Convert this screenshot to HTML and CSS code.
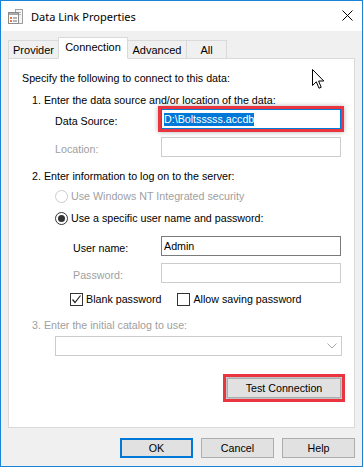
FILE: index.html
```html
<!DOCTYPE html>
<html>
<head>
<meta charset="utf-8">
<link rel="stylesheet" href="styles.css">
</head>
<body>
<div class="window">
  <div class="titlebar">
    <svg class="app-icon" width="16" height="16" viewBox="0 0 16 16">
      <rect x="7.5" y="0.5" width="7" height="14" fill="#f4f4f4" stroke="#a0a0a0"/>
      <line x1="9" y1="3.5" x2="13" y2="3.5" stroke="#b8b8b8"/>
      <line x1="9" y1="5.5" x2="13" y2="5.5" stroke="#b8b8b8"/>
      <rect x="0.5" y="3.5" width="10" height="11" fill="#fff" stroke="#8c8c8c"/>
      <rect x="1" y="4" width="9" height="2" fill="#a9a9a9"/>
      <rect x="2" y="8" width="2" height="2" fill="#e07b39"/>
      <rect x="5" y="8" width="4" height="2" fill="#b4b4b4"/>
      <rect x="2" y="11" width="2" height="2" fill="#e07b39"/>
      <rect x="5" y="11" width="4" height="2" fill="#b4b4b4"/>
    </svg>
    <span class="title">Data Link Properties</span>
    <svg class="close" width="11" height="11" viewBox="0 0 11 11">
      <path d="M0.5 0.5 L10.5 10.5 M10.5 0.5 L0.5 10.5" stroke="#000" stroke-width="1"/>
    </svg>
  </div>

  <div class="body">
    <div class="tabs">
      <div class="tab t-provider">Provider</div>
      <div class="tab active t-connection">Connection</div>
      <div class="tab t-advanced">Advanced</div>
      <div class="tab t-all">All</div>
    </div>

    <div class="panel">
      <div class="line intro">Specify the following to connect to this data:</div>
      <div class="line step step-1">1. Enter the data source and/or location of the data:</div>

      <div class="field-row row-source">
        <span class="label">Data Source:</span>
        <div class="input focused annotated"><span class="sel">D:\Boltsssss.accdb</span></div>
      </div>
      <div class="field-row row-location">
        <span class="label disabled">Location:</span>
        <div class="input disabled-input"></div>
      </div>

      <div class="line step step-2">2. Enter information to log on to the server:</div>
      <div class="option row-nt">
        <span class="radio radio-disabled"></span>
        <span class="disabled">Use Windows NT Integrated security</span>
      </div>
      <div class="option row-specific">
        <span class="radio radio-checked"></span>
        <span>Use a specific user name and password:</span>
      </div>

      <div class="field-row login row-user">
        <span class="label">User name:</span>
        <div class="input active-input">Admin</div>
      </div>
      <div class="field-row login row-pass">
        <span class="label disabled">Password:</span>
        <div class="input disabled-input"></div>
      </div>

      <div class="checks">
        <div class="check-item">
          <span class="checkbox">
            <svg width="11" height="11" viewBox="0 0 11 11"><path d="M1.5 5.5 L4 8.5 L9.5 1.5" fill="none" stroke="#222" stroke-width="1.2"/></svg>
          </span>
          <span>Blank password</span>
        </div>
        <div class="check-item">
          <span class="checkbox"></span>
          <span>Allow saving password</span>
        </div>
      </div>

      <div class="line step step-3 disabled">3. Enter the initial catalog to use:</div>
      <div class="combo">
        <svg class="chevron" width="10" height="6" viewBox="0 0 10 6"><path d="M0.5 0.5 L5 5 L9.5 0.5" fill="none" stroke="#a8a8a8"/></svg>
      </div>

      <div class="test-row">
        <button class="btn btn-test">Test Connection</button>
      </div>
    </div>

    <div class="footer">
      <button class="btn btn-default">OK</button>
      <button class="btn">Cancel</button>
      <button class="btn">Help</button>
    </div>
  </div>

  <svg class="cursor" width="13" height="21" viewBox="0 0 13 21">
    <path d="M0.5 0.5 V16.5 L4.3 12.8 L7 19.2 L9.2 18.3 L6.6 12 H11.8 Z" fill="#fff" stroke="#000"/>
  </svg>
</div>
</body>
</html>
```

FILE: styles.css
```css
html, body {
  margin: 0;
  padding: 0;
  background: #ffffff;
}

.window {
  position: relative;
  width: 363px;
  height: 467px;
  box-sizing: border-box;
  border: 1px solid #1883d7;
  background: #f0f0f0;
  display: flex;
  flex-direction: column;
  font-family: "Liberation Sans", Arial, sans-serif;
  font-size: 10.7px;
  color: #000;
  overflow: hidden;
}

/* ---------- title bar ---------- */
.titlebar {
  height: 30px;
  flex: none;
  background: #ffffff;
  display: flex;
  align-items: center;
  padding-left: 7px;
}

.app-icon {
  flex: none;
  margin-top: 1px;
}

.title {
  margin-left: 7px;
  font-family: "Noto Sans", "Open Sans", sans-serif;
  font-size: 11px;
  color: #000;
}

.close {
  margin-left: auto;
  margin-right: 9px;
  margin-top: -1px;
}

/* ---------- body ---------- */
.body {
  flex: 1;
  display: flex;
  flex-direction: column;
  padding: 6px 7px 0 7px;
  min-height: 0;
}

.tabs {
  display: flex;
  align-items: flex-end;
  height: 22px;
  margin-bottom: -1px;
  position: relative;
  z-index: 1;
}

.tab {
  box-sizing: border-box;
  height: 19px;
  border: 1px solid #d9d9d9;
  background: #f0f0f0;
  display: flex;
  align-items: center;
  justify-content: center;
  padding-top: 1px;
  margin-left: -1px;
  font-size: 11px;
}

.t-provider { width: 51px; margin-left: 0; }
.t-connection { width: 70px; }
.t-advanced { width: 60px; }
.t-all { width: 41px; }

.tab.active {
  height: 22px;
  background: #ffffff;
  border-bottom-color: #ffffff;
  padding-top: 0;
  padding-bottom: 2px;
  position: relative;
  z-index: 2;
}

.panel {
  flex: 1;
  display: flex;
  flex-direction: column;
  background: #ffffff;
  border: 1px solid #d9d9d9;
  padding: 12px 13px 0 13px;
  min-height: 0;
}

.line {
  height: 14px;
  line-height: 14px;
  white-space: nowrap;
}

.step { margin-left: 10px; }
.step-1 { margin-top: 8px; }
.step-2 { margin-top: 12px; }
.step-3 { margin-top: 12px; }

.disabled { color: #a0a0a0; }

/* ---------- fields ---------- */
.field-row {
  display: grid;
  grid-template-columns: 106px 180px;
  align-items: center;
  margin-left: 33px;
  height: 20px;
}

.row-source { margin-top: 2px; }
.row-location { margin-top: 8px; }
.row-user { margin-top: 11px; }
.row-pass { margin-top: 7px; }

.label {
  padding-top: 3px;
  white-space: nowrap;
}

.login .label { padding-left: 18px; }

.input {
  box-sizing: border-box;
  height: 20px;
  border: 1px solid #cccccc;
  background: #ffffff;
  padding-left: 2px;
  display: flex;
  align-items: center;
  white-space: nowrap;
}

.input.focused { border-color: #0078d7; }
.input.active-input { border-color: #7a7a7a; }

.sel {
  background: #0078d7;
  color: #ffffff;
  line-height: 13px;
}

.annotated {
  outline: 3px solid #e8353f;
  box-shadow: 0 0 5px 3px rgba(0, 0, 0, 0.3);
}

/* ---------- radio options ---------- */
.option {
  display: flex;
  align-items: center;
  height: 14px;
  margin-left: 33px;
  white-space: nowrap;
}

.row-nt { margin-top: 6px; }
.row-specific { margin-top: 8px; }

.radio {
  box-sizing: border-box;
  width: 13px;
  height: 13px;
  border-radius: 50%;
  border: 1px solid #333333;
  background: #ffffff;
  margin-right: 3px;
  flex: none;
  display: flex;
  align-items: center;
  justify-content: center;
}

.radio-disabled { border-color: #cccccc; }

.radio-checked::after {
  content: "";
  width: 7px;
  height: 7px;
  border-radius: 50%;
  background: #333333;
}

/* ---------- checkboxes ---------- */
.checks {
  display: flex;
  gap: 16px;
  height: 14px;
  margin-top: 9px;
  margin-left: 48px;
  align-items: center;
}

.check-item {
  display: flex;
  align-items: center;
  white-space: nowrap;
}

.checkbox {
  box-sizing: border-box;
  width: 13px;
  height: 13px;
  border: 1px solid #333333;
  background: #ffffff;
  margin-right: 3px;
  display: flex;
  align-items: center;
  justify-content: center;
  flex: none;
}

/* ---------- combo ---------- */
.combo {
  box-sizing: border-box;
  width: 287px;
  height: 20px;
  margin-left: 33px;
  margin-top: 4px;
  border: 1px solid #cccccc;
  background: #ffffff;
  display: flex;
  align-items: center;
  justify-content: flex-end;
  padding-right: 4px;
}

/* ---------- buttons ---------- */
.test-row {
  display: flex;
  justify-content: flex-end;
  margin-top: 22px;
}

.btn {
  box-sizing: border-box;
  height: 20px;
  width: 73px;
  border: 1px solid #adadad;
  background: #e1e1e1;
  font-family: "Liberation Sans", Arial, sans-serif;
  font-size: 10.7px;
  color: #000;
  padding: 0;
  margin: 0;
}

.btn-test {
  width: 114px;
  outline: 3px solid #e8353f;
  outline-offset: 1px;
  box-shadow: 0 0 2px 1px rgba(0, 0, 0, 0.35);
}

.btn-default {
  border: 2px solid #0078d7;
}

.footer {
  flex: none;
  display: flex;
  justify-content: flex-end;
  gap: 8px;
  padding: 10px 0 8px 0;
}

/* ---------- pointer overlay ---------- */
.cursor {
  position: absolute;
  left: 311px;
  top: 68px;
}
```
